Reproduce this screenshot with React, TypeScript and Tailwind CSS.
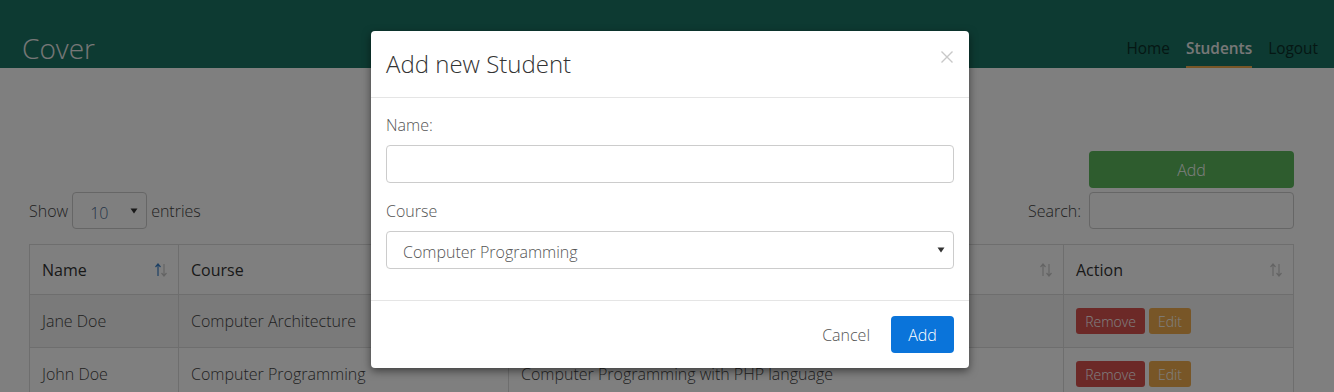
import React from "react"

type Student = {
  name: string
  course: string
  description: string
}

const students: Student[] = [
  { name: "Jane Doe", course: "Computer Architecture", description: "Computer Architecture and Organization" },
  { name: "John Doe", course: "Computer Programming", description: "Computer Programming with PHP language" },
]

function SortIcon({ active }: { active?: boolean }) {
  return (
    <svg width="14" height="14" viewBox="0 0 14 14" className="shrink-0">
      <path d="M4 13 L4 1.5 M1.5 4 L4 1 L6.5 4" stroke={active ? "#3a80c8" : "#c8c8c8"} strokeWidth="1.2" fill="none" />
      <path d="M10 1 L10 12.5 M7.5 10 L10 13 L12.5 10" stroke="#c8c8c8" strokeWidth="1.2" fill="none" />
    </svg>
  )
}

function Caret() {
  return (
    <svg width="8" height="6" viewBox="0 0 8 6" className="shrink-0">
      <path d="M0.5 0.5 L7.5 0.5 L4 5.5 Z" fill="#333" />
    </svg>
  )
}

function Navbar() {
  return (
    <header className="h-[68px] bg-[#1a7464] flex items-end justify-between pl-[22px] pr-[16px]">
      <div className="text-[28px] leading-[40px] font-light text-[#eeeeee]">Cover</div>
      <nav className="flex gap-[16px] text-[15.4px]">
        <a className="leading-[24px] pb-[5px] border-b-2 border-transparent text-[#0a2e28]">Home</a>
        <a className="leading-[24px] pb-[5px] border-b-2 border-[#f0ad4e] text-[#eeeeee] font-semibold">Students</a>
        <a className="leading-[24px] pb-[5px] border-b-2 border-transparent text-[#0a2e28]">Logout</a>
      </nav>
    </header>
  )
}

function StudentTable() {
  return (
    <table className="w-[1265px] border-collapse border border-[#dddddd] mt-[15px] text-[16px]">
      <thead>
        <tr className="h-[50px] text-left text-[#333]">
          <th className="w-[149px] border border-[#dddddd] px-[12px] pr-[10px] font-normal">
            <div className="flex items-center justify-between">
              <span>Name</span>
              <SortIcon active />
            </div>
          </th>
          <th className="w-[330px] border border-[#dddddd] px-[12px] pr-[10px] font-normal">
            <div className="flex items-center justify-between">
              <span>Course</span>
              <SortIcon />
            </div>
          </th>
          <th className="w-[555px] border border-[#dddddd] px-[12px] pr-[10px] font-normal">
            <div className="flex items-center justify-between">
              <span>Description</span>
              <SortIcon />
            </div>
          </th>
          <th className="border border-[#dddddd] px-[12px] pr-[10px] font-normal">
            <div className="flex items-center justify-between">
              <span>Action</span>
              <SortIcon />
            </div>
          </th>
        </tr>
      </thead>
      <tbody className="font-light text-[#444]">
        {students.map((s, i) => (
          <tr key={s.name} className={i % 2 === 0 ? "h-[53px] bg-[#f4f4f4]" : "h-[53px] bg-white"}>
            <td className="border border-[#dddddd] px-[12px]">{s.name}</td>
            <td className="border border-[#dddddd] px-[12px]">{s.course}</td>
            <td className="border border-[#dddddd] px-[12px]">{s.description}</td>
            <td className="border border-[#dddddd] px-[12px]">
              <div className="flex gap-[4px]">
                <button className="h-[26px] w-[69px] rounded-[3px] bg-[#d9534f] text-white text-[14px]">Remove</button>
                <button className="h-[26px] w-[42px] rounded-[3px] bg-[#f0ad4e] text-white text-[14px]">Edit</button>
              </div>
            </td>
          </tr>
        ))}
      </tbody>
    </table>
  )
}

function AddStudentModal() {
  return (
    <div className="absolute left-[371px] top-[31px] w-[598px] bg-white rounded-[4px] shadow-[0_3px_9px_rgba(0,0,0,0.5)]">
      <div className="relative h-[67px] border-b border-[#e5e5e5] px-[15px] flex items-center">
        <h4 className="text-[24px] font-light text-[#333] leading-[34px]">Add new Student</h4>
        <svg width="12" height="12" viewBox="0 0 12 12" className="absolute right-[16px] top-[20px]">
          <path d="M0.5 0.5 L11.5 11.5 M11.5 0.5 L0.5 11.5" stroke="#c8c8c8" strokeWidth="1.4" />
        </svg>
      </div>
      <div className="px-[15px] pt-[15px] pb-[16px] font-light text-[16px] text-[#555]">
        <label className="block leading-[24px] mb-[8px]">Name:</label>
        <input className="block w-full h-[38px] border border-[#cccccc] rounded-[4px] px-[12px] outline-none" />
        <label className="block leading-[24px] mt-[16px] mb-[8px]">Course</label>
        <div className="w-full h-[38px] border border-[#cccccc] rounded-[4px] pl-[16px] pr-[8px] flex items-center justify-between">
          <span className="pt-[3px]">Computer Programming</span>
          <Caret />
        </div>
        <div className="h-[15px]" />
      </div>
      <div className="border-t border-[#e5e5e5] h-[68px] px-[15px] flex items-center justify-end gap-[21px] font-light text-[16px]">
        <button className="text-[#555]">Cancel</button>
        <button className="h-[37px] w-[63px] rounded-[4px] bg-[#0a74da] text-white">Add</button>
      </div>
    </div>
  )
}

export default function App() {
  return (
    <div className="relative w-[1334px] h-[392px] overflow-hidden bg-white font-['Open_Sans',sans-serif]">
      <Navbar />
      <main className="ml-[29px] w-[1265px]">
        <div className="flex justify-end mt-[83px]">
          <button className="w-[205px] h-[37px] rounded-[4px] bg-[#5cb85c] text-white text-[16px] font-light">Add</button>
        </div>
        <div className="flex items-center justify-between mt-[4px] h-[37px] text-[16px] font-light text-[#444]">
          <div className="flex items-center gap-[4px]">
            <span>Show</span>
            <div className="w-[75px] h-[37px] border border-[#cccccc] rounded-[4px] pl-[17px] pr-[8px] flex items-center justify-between">
              <span className="pt-[5px] text-[#4a6a90]">10</span>
              <Caret />
            </div>
            <span>entries</span>
          </div>
          <div className="flex items-center gap-[8px]">
            <span>Search:</span>
            <input className="w-[205px] h-[37px] border border-[#cccccc] rounded-[4px] outline-none" />
          </div>
        </div>
        <StudentTable />
      </main>
      <div className="absolute inset-0 bg-black/50" />
      <AddStudentModal />
    </div>
  )
}
